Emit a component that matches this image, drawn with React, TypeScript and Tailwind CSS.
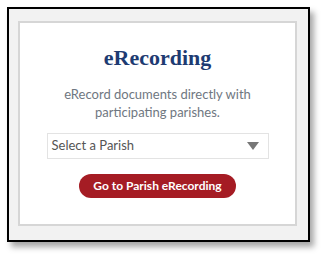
const App = () => {
    return (
        <div className="w-[325px] h-[257px] bg-white pt-[7px] pl-[7px]">
            <div className="w-[303px] h-[235px] border-2 border-black bg-[#f2f2f2] pl-[9px] pr-[11px] pt-[12px] pb-[14px] shadow-[4px_5px_6px_rgba(0,0,0,0.35)]">
                <div className="w-full h-full border-2 border-[#d6d6d6] bg-white flex flex-col items-center pt-[22px]">
                    <h1 className="text-[22px] leading-[26px] font-bold text-[#1e3b72] font-['Liberation_Serif',serif]">eRecording</h1>

                    <p className="mt-[14px] text-[13px] leading-[18px] text-[#6f7781] text-center font-['Lato',sans-serif]">
                        eRecord documents directly with<br />participating parishes.
                    </p>

                    <div className="mt-[12px] w-[222px] h-[26px] border border-[#e3e3e3] flex items-center justify-between pl-[4px] pr-[9px]">
                        <span className="text-[13px] text-[#555] font-['Lato',sans-serif]">Select a Parish</span>
                        <svg width="12" height="8" viewBox="0 0 12 8"><polygon points="0,0 12,0 6,8" fill="#777" /></svg>
                    </div>

                    <button className="mt-[15px] w-[157px] h-[24px] rounded-full bg-[#a51c24] text-white text-[12px] font-bold font-['Lato',sans-serif]">
                        Go to Parish eRecording
                    </button>
                </div>
            </div>
        </div>
    );
};

export default App;
